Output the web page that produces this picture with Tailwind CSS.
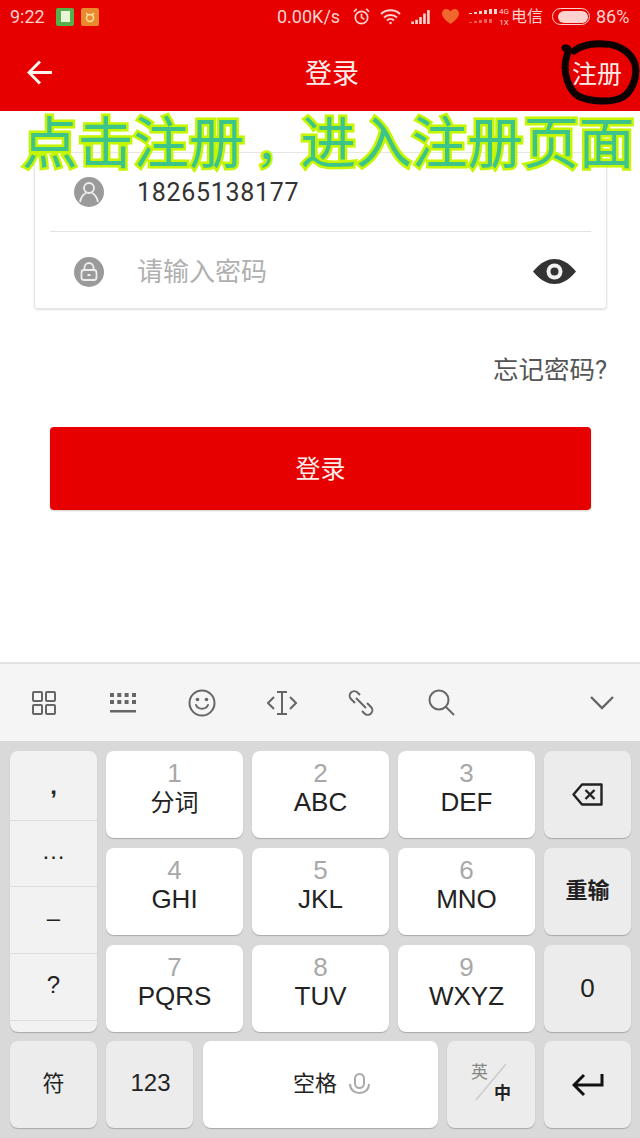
<!DOCTYPE html>
<html lang="zh-CN">
<head>
    <meta charset="UTF-8">
    <meta name="viewport" content="width=device-width, initial-scale=1.0">
    <title>登录</title>
    <script src="https://cdn.jsdelivr.net/npm/@tailwindcss/browser@4"></script>
</head>
<body>
<div class="relative w-[640px] h-[1138px] overflow-hidden bg-white flex flex-col font-['Roboto','Noto_Sans_CJK_SC',sans-serif]">

    <!-- 顶部红色区域 -->
    <header class="bg-[#e60000] h-[111px] shrink-0">
        <!-- 状态栏 -->
        <div class="h-[33px] flex items-center pl-[10px] text-[#ffd2cf] text-[18px]">
            <span class="w-[46px]">9:22</span>
            <span class="w-[18px] h-[18px] rounded-[2px] bg-[#58b04c] flex items-center justify-center"><span class="w-[9px] h-[11px] bg-[#e8f5d8]"></span></span>
            <span class="w-[18px] h-[18px] rounded-[2px] bg-[#ea8a2c] ml-[7px] flex items-center justify-center">
                <svg width="12" height="12" viewBox="0 0 12 12" fill="none" stroke="#ffe6a8" stroke-width="1.4"><circle cx="6" cy="7" r="3.5"/><path d="M2 2l2 2M10 2L8 4"/></svg>
            </span>
            <span class="ml-[178px] w-[75px]">0.00K/s</span>
            <svg class="w-[19px] h-[19px]" viewBox="0 0 20 20" fill="none" stroke="#ffd2cf" stroke-width="1.8"><circle cx="10" cy="11" r="6.5"/><path d="M10 7v4l3 2M2 5l3-3M18 5l-3-3"/></svg>
            <svg class="ml-[9px] w-[21px] h-[17px]" viewBox="0 0 21 17" fill="none" stroke="#ffd2cf" stroke-width="2"><path d="M1 6c5-5 14-5 19 0M4 9.500c3.500-3.500 9.500-3.500 13 0M7 12.500c2-2 5-2 7 0"/><circle cx="10.500" cy="15" r="1.300" fill="#ffd2cf" stroke="none"/></svg>
            <svg class="ml-[9px] w-[21px] h-[14px]" viewBox="0 0 21 16" fill="#ffd2cf"><path d="M0 13h3v3H0zM4.500 11h3v5h-3zM9 8h3v8H9zM13.500 4h3v12h-3zM18 0h3v16h-3z"/></svg>
            <svg class="ml-[11px] w-[17px] h-[15px]" viewBox="0 0 17 15" fill="#f0682e"><path d="M8.500 15C3 11 0 8 0 4.500 0 2 2 0 4.300 0c1.800 0 3.300 1 4.200 2.500C9.400 1 10.900 0 12.700 0 15 0 17 2 17 4.500 17 8 14 11 8.500 15z"/></svg>
            <svg class="ml-[10px] w-[29px] h-[15px]" viewBox="0 0 29 15" fill="#ffd2cf"><path d="M0 4h3v1H0zM5 3h3v2H5zM10 2h3v3h-3zM15 1h3v4h-3zM20 0h3v5h-3zM25 0h3v5h-3z"/><path opacity=".45" d="M0 13h3v1H0zM5 12h3v2H5zM10 11h3v3h-3zM15 10h3v4h-3zM20 10h3v4h-3z"/></svg>
            <span class="flex flex-col text-[8px] leading-[11px] w-[14px] ml-[-1px] text-center"><span>4G</span><span>1X</span></span>
            <span class="w-[41px] text-[16px]">电信</span>
            <span class="w-[38px] h-[17px] rounded-full border-[1.500px] border-[#ffd2cf] p-[1.500px] flex justify-end"><span class="w-[30px] rounded-full bg-[#ffd2cf]"></span></span>
            <span class="ml-[6px]">86%</span>
        </div>
        <!-- 导航 -->
        <div class="h-[78px] flex items-center pl-[27px] text-white">
            <div class="w-[278px]">
                <svg width="25" height="25" viewBox="0 0 25 25" fill="none" stroke="#fff3ee" stroke-width="3"><path d="M25 12.500H2M13 1.500 2 12.500l11 11"/></svg>
            </div>
            <span class="text-[27px] leading-none mt-[4px] text-[#ffece8]">登录</span>
            <div class="relative ml-[213px] mt-[8px]">
                <span class="text-[25px] leading-none text-[#ffece8]">注册</span>
                <!-- 手绘黑圈 -->
                <svg class="absolute left-[-12px] top-[-24px]" width="80" height="68" viewBox="0 0 80 68" fill="none" stroke="#0c0000" stroke-width="7" stroke-linecap="round"><path d="M5 10c6-1 2 6 1 11-3 14 2 30 12 37 12 6 34 7 45 1 9-6 15-20 12-33C71 14 58 6 44 6 32 5 22 7 14 13"/></svg>
            </div>
        </div>
    </header>

    <!-- 表单 -->
    <main class="relative flex-1 pl-[34px] pr-[33px]">
        <div class="mt-[41px] h-[157px] rounded-[4px] border border-[#e6e6e6] shadow-[0_1px_2px_#ddd] px-[15px]">
            <div class="h-[79px] flex items-center border-b border-[#e3e3e3] pl-[24px]">
                <svg width="30" height="30" viewBox="0 0 30 30"><circle cx="15" cy="15" r="15" fill="#9a9a9a"/><circle cx="15" cy="11" r="5" fill="none" stroke="#eee" stroke-width="1.800"/><path d="M6 25c1-5 4-8 6-9M24 25c-1-5-4-8-6-9" fill="none" stroke="#eee" stroke-width="1.800"/></svg>
                <span class="ml-[33px] mt-[2px] text-[25px] tracking-[0.7px] text-[#333]">18265138177</span>
            </div>
            <div class="h-[77px] flex items-center pl-[24px] pt-[2px]">
                <svg width="30" height="30" viewBox="0 0 30 30"><circle cx="15" cy="15" r="15" fill="#9a9a9a"/><rect x="7.500" y="13" width="15" height="10" rx="2.500" fill="none" stroke="#eee" stroke-width="1.800"/><path d="M10.500 13v-2.500a4.500 4.500 0 0 1 9 0V13" fill="none" stroke="#eee" stroke-width="1.800"/><rect x="13.500" y="17" width="3" height="2" fill="#eee"/></svg>
                <span class="ml-[33px] text-[26px] text-[#b0b0b0] mt-[2px]">请输入密码</span>
                <svg class="ml-auto mr-[15px]" width="43" height="25" viewBox="0 0 43 25"><path d="M0 12.500C8 3 15 0 21.500 0S35 3 43 12.500C35 22 28 25 21.500 25S8 22 0 12.500z" fill="#333"/><circle cx="21.500" cy="12.500" r="8" fill="#f2f2f2"/><circle cx="21.500" cy="12.500" r="4" fill="#333"/></svg>
            </div>
        </div>
        <p class="mt-[43px] text-right text-[25.500px] leading-[36px] text-[#555]">忘记密码?</p>
        <button class="mt-[39px] ml-[16px] w-[541px] h-[83px] pt-[2px] rounded-[4px] bg-[#e60000] text-[25px] text-[#ffece8] shadow-[0_1px_2px_#ccc]">登录</button>
    </main>

    <!-- 提示文字 -->
    <div class="absolute left-[22px] top-[111px] text-[55.700px] leading-[56px] whitespace-nowrap text-[#3cc48a] [-webkit-text-stroke:5px_#c6f500] [paint-order:stroke_fill] font-['Noto_Sans_CJK_SC',sans-serif]">点击注册<span class="inline-block w-[55.700px] pl-[11px] text-[44px]">，</span>进入注册页面</div>

    <!-- 键盘 -->
    <section class="h-[476px] shrink-0 bg-[#d9d9d9] font-['Liberation_Sans','Noto_Sans_CJK_SC',sans-serif] text-[#222]">
        <div class="h-[79px] bg-[#f5f5f5] border-t-2 border-[#e2e2e2] flex items-center text-[#666]">
            <svg class="ml-[32px]" width="24" height="24" viewBox="0 0 24 24" fill="none" stroke="#666" stroke-width="2"><rect x="1" y="1" width="9" height="9" rx="1"/><rect x="14" y="1" width="9" height="9" rx="1"/><rect x="1" y="14" width="9" height="9" rx="1"/><rect x="14" y="14" width="9" height="9" rx="1"/></svg>
            <svg class="ml-[54px]" width="26" height="22" viewBox="0 0 26 22" fill="#666"><path d="M0 1h4v4H0zM7.300 1h4v4h-4zM14.600 1h4v4h-4zM22 1h4v4h-4zM0 8h4v4H0zM7.300 8h4v4h-4zM14.600 8h4v4h-4zM22 8h4v4h-4zM0 18h26v2.500H0z"/></svg>
            <svg class="ml-[52px]" width="28" height="28" viewBox="0 0 28 28" fill="none" stroke="#666" stroke-width="2"><circle cx="14" cy="14" r="12.500"/><path d="M8 16c2 5 10 5 12 0" stroke-linecap="round"/><circle cx="9.500" cy="10.500" r="1.800" fill="#666" stroke="none"/><circle cx="18.500" cy="10.500" r="1.800" fill="#666" stroke="none"/></svg>
            <svg class="ml-[51px]" width="30" height="24" viewBox="0 0 30 24" fill="none" stroke="#666" stroke-width="2"><path d="M7 6 1 12l6 6M23 6l6 6-6 6M15 1v22M10 1h10M10 23h10"/></svg>
            <svg class="ml-[51px]" width="26" height="26" viewBox="0 0 26 26" fill="none" stroke="#666" stroke-width="2"><path d="M12 5 9.500 2.500a4.500 4.500 0 0 0-6.500 6.500L7 13M14 21l2.500 2.500a4.500 4.500 0 0 0 6.500-6.500L19 13M8 8l10 10"/></svg>
            <svg class="ml-[54px]" width="27" height="27" viewBox="0 0 27 27" fill="none" stroke="#666" stroke-width="2"><circle cx="11" cy="11" r="9.500"/><path d="m18 18 8 8"/></svg>
            <svg class="ml-[135px]" width="24" height="14" viewBox="0 0 24 14" fill="none" stroke="#666" stroke-width="2.400"><path d="m1 1 11 11L23 1"/></svg>
        </div>
        <div class="pl-[10px] pt-[10px] flex gap-[9px]">
            <!-- 左侧标点列 -->
            <div class="w-[87px] h-[281px] rounded-[8px] bg-[#f2f2f2] shadow-[0_1px_1px_#a8a8a8] flex flex-col text-[24px] text-center">
                <div class="h-[70px] border-b border-[#dcdcdc] flex items-center justify-center font-bold">,</div>
                <div class="h-[66px] border-b border-[#dcdcdc] flex items-center justify-center pb-[6px]">…</div>
                <div class="h-[67px] border-b border-[#dcdcdc] flex items-center justify-center pb-[4px]">–</div>
                <div class="h-[67px] border-b border-[#dcdcdc] flex items-center justify-center pb-[4px]">?</div>
            </div>
            <!-- 数字键 -->
            <div class="grid grid-cols-[137px_137px_137px] gap-x-[9px] gap-y-[10px] auto-rows-[87px] text-[26px] leading-[29px] text-center">
                <div class="rounded-[8px] bg-white shadow-[0_1px_1px_#a8a8a8] pt-[8px]"><div class="text-[#a8a8a8]">1</div><div class="text-[24px]">分词</div></div>
                <div class="rounded-[8px] bg-white shadow-[0_1px_1px_#a8a8a8] pt-[8px]"><div class="text-[#a8a8a8]">2</div><div>ABC</div></div>
                <div class="rounded-[8px] bg-white shadow-[0_1px_1px_#a8a8a8] pt-[8px]"><div class="text-[#a8a8a8]">3</div><div>DEF</div></div>
                <div class="rounded-[8px] bg-white shadow-[0_1px_1px_#a8a8a8] pt-[8px]"><div class="text-[#a8a8a8]">4</div><div>GHI</div></div>
                <div class="rounded-[8px] bg-white shadow-[0_1px_1px_#a8a8a8] pt-[8px]"><div class="text-[#a8a8a8]">5</div><div>JKL</div></div>
                <div class="rounded-[8px] bg-white shadow-[0_1px_1px_#a8a8a8] pt-[8px]"><div class="text-[#a8a8a8]">6</div><div>MNO</div></div>
                <div class="rounded-[8px] bg-white shadow-[0_1px_1px_#a8a8a8] pt-[8px]"><div class="text-[#a8a8a8]">7</div><div>PQRS</div></div>
                <div class="rounded-[8px] bg-white shadow-[0_1px_1px_#a8a8a8] pt-[8px]"><div class="text-[#a8a8a8]">8</div><div>TUV</div></div>
                <div class="rounded-[8px] bg-white shadow-[0_1px_1px_#a8a8a8] pt-[8px]"><div class="text-[#a8a8a8]">9</div><div>WXYZ</div></div>
            </div>
            <!-- 右侧功能键 -->
            <div class="w-[87px] flex flex-col gap-[10px]">
                <div class="h-[87px] rounded-[8px] bg-[#ececec] shadow-[0_1px_1px_#a8a8a8] flex items-center justify-center">
                    <svg width="31" height="23" viewBox="0 0 31 23" fill="none" stroke="#222" stroke-width="2.400"><path d="M10 1.500h19.500v20H10L1.500 11.500z" stroke-linejoin="round"/><path d="m13.500 7 9 9M22.500 7l-9 9"/></svg>
                </div>
                <div class="h-[87px] rounded-[8px] bg-[#ececec] shadow-[0_1px_1px_#a8a8a8] flex items-center justify-center text-[22px] font-bold pb-[2px]">重输</div>
                <div class="h-[87px] rounded-[8px] bg-[#ececec] shadow-[0_1px_1px_#a8a8a8] flex items-center justify-center text-[26px]">0</div>
            </div>
        </div>
        <!-- 底部一行 -->
        <div class="pl-[10px] mt-[9px] flex h-[87px]">
            <div class="w-[87px] rounded-[8px] bg-[#ececec] shadow-[0_1px_1px_#a8a8a8] flex items-center justify-center text-[22px] pb-[2px]">符</div>
            <div class="ml-[9px] w-[87px] rounded-[8px] bg-[#ececec] shadow-[0_1px_1px_#a8a8a8] flex items-center justify-center text-[24px] pb-[4px] pl-[2px]">123</div>
            <div class="ml-[10px] w-[235px] rounded-[8px] bg-white shadow-[0_1px_1px_#a8a8a8] flex items-center justify-center gap-[12px] text-[22px] pl-[22px] pb-[2px]">
                <span>空格</span>
                <svg width="21" height="22" viewBox="0 0 21 22" fill="none" stroke="#aaa" stroke-width="2"><rect x="6" y="1" width="9" height="14" rx="4.500"/><path d="M1 11c0 12 19 12 19 0"/></svg>
            </div>
            <div class="relative ml-[9px] w-[88px] rounded-[8px] bg-[#ececec] shadow-[0_1px_1px_#a8a8a8]">
                <span class="absolute left-[24px] top-[19px] text-[17px] text-[#888]">英</span>
                <svg class="absolute left-[27px] top-[22px]" width="34" height="38" viewBox="0 0 34 38" fill="none" stroke="#ccc" stroke-width="1.500"><path d="M32 1 2 37"/></svg>
                <span class="absolute left-[47px] top-[40px] text-[17px] font-bold">中</span>
            </div>
            <div class="ml-[9px] w-[87px] rounded-[8px] bg-[#ececec] shadow-[0_1px_1px_#a8a8a8] flex items-center justify-center">
                <svg width="32" height="24" viewBox="0 0 32 24" fill="none" stroke="#111" stroke-width="3"><path d="M30 1v11H3M12 2 2 12l10 10"/></svg>
            </div>
        </div>
    </section>
</div>
</body>
</html>
